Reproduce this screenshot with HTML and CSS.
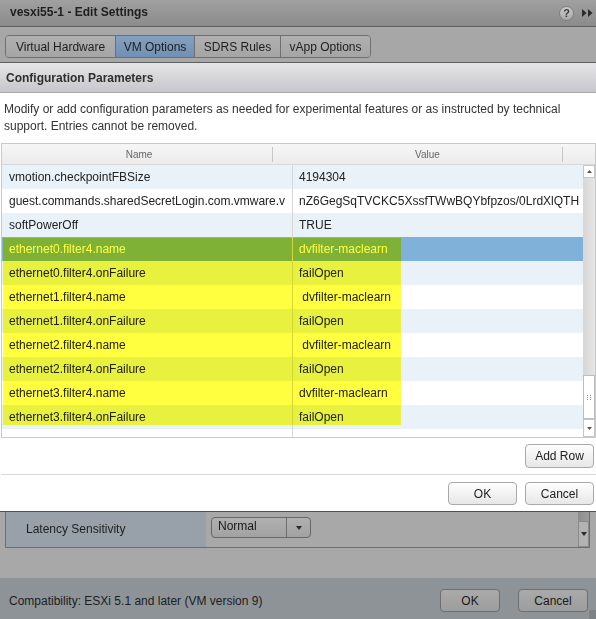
FILE: index.html
```html
<!DOCTYPE html>
<html>
<head>
<meta charset="utf-8">
<title>vesxi55-1 - Edit Settings</title>
<link rel="stylesheet" href="styles.css">
</head>
<body>
<div class="titlebar">
  <span class="title">vesxi55-1 - Edit Settings</span>
  <span class="help">?</span>
  <svg class="expand" width="11" height="8" viewBox="0 0 11 8"><polygon points="0,0 4.5,4 0,8"/><polygon points="6,0 10.5,4 6,8"/></svg>
</div>
<div class="tabbar">
  <div class="tabs">
    <div class="tab t1">Virtual Hardware</div>
    <div class="tab t2 active">VM Options</div>
    <div class="tab t3">SDRS Rules</div>
    <div class="tab t4">vApp Options</div>
  </div>
</div>
<div class="modal">
  <div class="modal-head">Configuration Parameters</div>
  <p class="desc">Modify or add configuration parameters as needed for experimental features or as instructed by technical support. Entries cannot be removed.</p>
  <div class="grid">
    <div class="grid-head">
      <div class="hcell hname"><span class="hlabel">Name</span><span class="hsep"></span></div>
      <div class="hcell hvalue"><span class="hlabel">Value</span><span class="hsep"></span></div>
      <div class="hcell hscroll"></div>
    </div>
    <div class="grid-body">
      <div class="rows">
        <div class="row alt"><div class="c name">vmotion.checkpointFBSize</div><div class="c val">4194304</div></div>
        <div class="row"><div class="c name">guest.commands.sharedSecretLogin.com.vmware.v</div><div class="c val">nZ6GegSqTVCKC5XssfTWwBQYbfpzos/0LrdXlQTH</div></div>
        <div class="row alt"><div class="c name">softPowerOff</div><div class="c val">TRUE</div></div>
        <div class="row selected"><div class="c name">ethernet0.filter4.name</div><div class="c val">dvfilter-maclearn</div></div>
        <div class="row alt"><div class="c name">ethernet0.filter4.onFailure</div><div class="c val">failOpen</div></div>
        <div class="row"><div class="c name">ethernet1.filter4.name</div><div class="c val">&nbsp;dvfilter-maclearn</div></div>
        <div class="row alt"><div class="c name">ethernet1.filter4.onFailure</div><div class="c val">failOpen</div></div>
        <div class="row"><div class="c name">ethernet2.filter4.name</div><div class="c val">&nbsp;dvfilter-maclearn</div></div>
        <div class="row alt"><div class="c name">ethernet2.filter4.onFailure</div><div class="c val">failOpen</div></div>
        <div class="row"><div class="c name">ethernet3.filter4.name</div><div class="c val">dvfilter-maclearn</div></div>
        <div class="row alt"><div class="c name">ethernet3.filter4.onFailure</div><div class="c val">failOpen</div></div>
        <div class="row"><div class="c name"></div><div class="c val"></div></div>
        <div class="highlight"></div>
      </div>
      <div class="vscroll">
        <div class="sb-btn up"><svg width="5" height="3" viewBox="0 0 5 3"><polygon points="2.5,0 5,3 0,3"/></svg></div>
        <div class="sb-track"></div>
        <div class="sb-thumb"><svg width="5" height="5" viewBox="0 0 5 5"><rect x="0" y="0" width="1" height="1"/><rect x="3" y="0" width="1" height="1"/><rect x="0" y="2" width="1" height="1"/><rect x="3" y="2" width="1" height="1"/><rect x="0" y="4" width="1" height="1"/><rect x="3" y="4" width="1" height="1"/></svg></div>
        <div class="sb-btn down"><svg width="5" height="3" viewBox="0 0 5 3"><polygon points="0,0 5,0 2.5,3"/></svg></div>
      </div>
    </div>
  </div>
  <div class="addrow"><div class="btn btn-add">Add Row</div></div>
  <div class="sep"></div>
  <div class="actions"><div class="btn btn-ok">OK</div><div class="btn btn-cancel">Cancel</div></div>
</div>
<div class="latency">
  <div class="lat-label">Latency Sensitivity</div>
  <div class="dropdown"><span class="dd-text">Normal</span><span class="dd-arrow"><svg width="6" height="4" viewBox="0 0 6 4"><polygon points="0,0 6,0 3,4"/></svg></span></div>
  <div class="lat-scroll"><div class="ls-top"></div><div class="ls-btn"><svg width="6" height="4" viewBox="0 0 6 4"><polygon points="0,0 6,0 3,4"/></svg></div></div>
</div>
<div class="gap"></div>
<div class="footer">
  <span class="compat">Compatibility: ESXi 5.1 and later (VM version 9)</span>
  <div class="fbtns"><div class="fbtn f-ok">OK</div><div class="fbtn f-cancel">Cancel</div></div>
  <span class="grip"></span>
</div>
</body>
</html>
```
FILE: styles.css
```css
* { box-sizing: border-box; }
html, body { margin: 0; padding: 0; }
body {
  width: 596px;
  height: 619px;
  overflow: hidden;
  background: #a8a8a8;
  font-family: "Liberation Sans", Arial, sans-serif;
  font-size: 12px;
  color: #222;
  position: relative;
}

/* title bar (dimmed background window) */
.titlebar {
  height: 27px;
  border-bottom: 1px solid #5e5e5e;
  background: linear-gradient(#a0a0a0, #8b8b8b);
  display: flex;
  align-items: center;
  padding: 0 3px 0 10px;
}
.title {
  font-weight: bold;
  color: #1f1f1f;
  line-height: 14px;
  margin-bottom: 3px;
}
.help {
  margin-left: auto;
  width: 15px;
  height: 15px;
  border-radius: 50%;
  border: 1px solid #7c7c7c;
  background: linear-gradient(#cdcdcd, #a8a8a8);
  font-weight: bold;
  font-size: 11px;
  color: #3a3a3a;
  display: flex;
  align-items: center;
  justify-content: center;
  line-height: 1;
}
.expand { margin-left: 8px; fill: #2b2b2b; }

/* tabs */
.tabbar {
  height: 36px;
  border-bottom: 1px solid #5f5f5f;
  background: #a7a7a7;
  padding: 8px 0 0 5px;
}
.tabs {
  display: flex;
  height: 23px;
  width: max-content;
  border: 1px solid #6f6f6f;
  border-radius: 4px;
  overflow: hidden;
}
.tab {
  display: flex;
  align-items: center;
  justify-content: center;
  background: linear-gradient(#b0b0b0, #a5a5a5);
  color: #1e1e1e;
  border-left: 1px solid #6f6f6f;
}
.tab:first-child { border-left: 0; }
.t1 { width: 109px; }
.t2 { width: 79px; }
.t3 { width: 86px; }
.t4 { width: 90px; }
.tab.active { background: linear-gradient(#83a0c0, #7190b3); }

/* modal */
.modal {
  background: #fff;
  border-bottom: 1px solid #505050;
  padding-bottom: 6px;
}
.modal-head {
  height: 30px;
  border-bottom: 1px solid #a9a9a9;
  background: linear-gradient(#e5e5e8, #c7c7cb);
  padding-left: 6px;
  display: flex;
  align-items: center;
  font-weight: bold;
  color: #2e2e2e;
}
.desc {
  margin: 0;
  padding: 8px 4px 0;
  line-height: 17px;
  color: #333;
}

/* grid */
.grid {
  margin: 8px 0 0 1px;
  border: 1px solid #c9c9c9;
}
.grid-head {
  display: flex;
  height: 21px;
  border-bottom: 1px solid #d8d8d8;
  background: linear-gradient(#f6f6f6, #ececec);
}
.hcell { display: flex; align-items: center; }
.hname { width: 291px; }
.hvalue { width: 290px; }
.hscroll { width: 12px; }
.hname .hlabel { width: 274px; }
.hvalue .hlabel { width: 269px; }
.hlabel {
  text-align: center;
  font-size: 10px;
  color: #666;
}
.hsep {
  width: 1px;
  height: 15px;
  background: #c6c6c6;
}
.hname .hsep { margin-left: -4px; }
.grid-body {
  display: flex;
  height: 272px;
}
.rows {
  width: 581px;
  position: relative;
  overflow: hidden;
}
.row {
  display: flex;
  height: 24px;
  line-height: 24px;
  background: #fff;
  color: #222;
}
.row.alt { background: #e9f1f9; }
.row.selected { background: #7fb1d9; color: #fff; }
.c {
  white-space: nowrap;
  overflow: hidden;
}
.c.name { width: 290px; padding-left: 7px; }
.c.val { width: 291px; padding-left: 6px; border-left: 1px solid #d6d6d6; }
.highlight {
  position: absolute;
  left: 1px;
  top: 73px;
  width: 398px;
  height: 187px;
  background: #ffff40;
  mix-blend-mode: multiply;
}
.vscroll {
  width: 12px;
  display: flex;
  flex-direction: column;
}
.vscroll svg { fill: #555; }
.sb-btn {
  height: 13px;
  background: #fff;
  border: 1px solid #c6c6c6;
  display: flex;
  align-items: center;
  justify-content: center;
}
.sb-btn.down { height: 18px; }
.sb-track {
  flex: 1;
  background: linear-gradient(90deg, #d6d6d6, #e6e6e6);
}
.sb-thumb {
  height: 44px;
  background: #fff;
  border: 1px solid #bdbdbd;
  display: flex;
  align-items: center;
  justify-content: center;
}
.sb-thumb svg { fill: #8a8a8a; }

/* buttons */
.btn {
  height: 24px;
  border: 1px solid #a9a9a9;
  border-radius: 4px;
  background: linear-gradient(#fefefe, #e7e7e7);
  color: #222;
  display: flex;
  align-items: center;
  justify-content: center;
}
.addrow {
  display: flex;
  justify-content: flex-end;
  padding: 6px 2px 0;
}
.btn-add { width: 69px; }
.sep {
  height: 1px;
  background: #d9d9d9;
  margin: 6px 0 0 1px;
}
.actions {
  display: flex;
  justify-content: flex-end;
  gap: 8px;
  padding: 7px 2px 0;
}
.actions .btn { height: 23px; width: 69px; }

/* dimmed background content */
.latency {
  display: flex;
  height: 36px;
  width: 585px;
  margin-left: 5px;
  border-left: 1px solid #6d6d6d;
  border-right: 1px solid #6d6d6d;
  border-bottom: 1px solid #6d6d6d;
}
.lat-label {
  width: 200px;
  background: #98a0a9;
  padding-left: 20px;
  line-height: 35px;
  color: #1f1f1f;
}
.dropdown {
  margin: 5px 0 0 5px;
  width: 100px;
  height: 21px;
  border: 1px solid #686868;
  border-radius: 4px;
  background: linear-gradient(#b0b0b0, #a2a2a2);
  display: flex;
}
.dd-text {
  width: 75px;
  padding-left: 6px;
  border-right: 1px solid #6e6e6e;
  line-height: 17px;
  color: #1a1a1a;
}
.dd-arrow {
  flex: 1;
  display: flex;
  align-items: center;
  justify-content: center;
}
.dd-arrow svg, .ls-btn svg { fill: #2a2a2a; }
.lat-scroll {
  margin-left: auto;
  width: 11px;
  display: flex;
  flex-direction: column;
}
.ls-top {
  height: 9px;
  background: linear-gradient(90deg, #8e8e8e, #9c9c9c);
}
.ls-btn {
  flex: 1;
  background: #b2b2b2;
  border: 1px solid #8a8a8a;
  display: flex;
  align-items: center;
  justify-content: center;
}
.gap { height: 30px; }
.footer {
  height: 41px;
  background: #8e9398;
  display: flex;
  align-items: center;
  padding: 0 8px 0 9px;
  position: relative;
}
.compat { color: #1d1d1d; padding-top: 4px; }
.fbtns {
  margin-left: auto;
  display: flex;
  gap: 18px;
  padding-top: 4px;
}
.fbtn {
  height: 23px;
  border: 1px solid #6e6e6e;
  border-radius: 4px;
  background: linear-gradient(#aaaaaa, #9d9d9d);
  color: #1a1a1a;
  display: flex;
  align-items: center;
  justify-content: center;
}
.f-ok { width: 60px; }
.f-cancel { width: 70px; }
.grip {
  position: absolute;
  right: 0;
  bottom: 0;
  width: 7px;
  height: 9px;
  background-image: radial-gradient(circle, #6a6e72 0.6px, transparent 0.8px);
  background-size: 2px 2px;
}
```
